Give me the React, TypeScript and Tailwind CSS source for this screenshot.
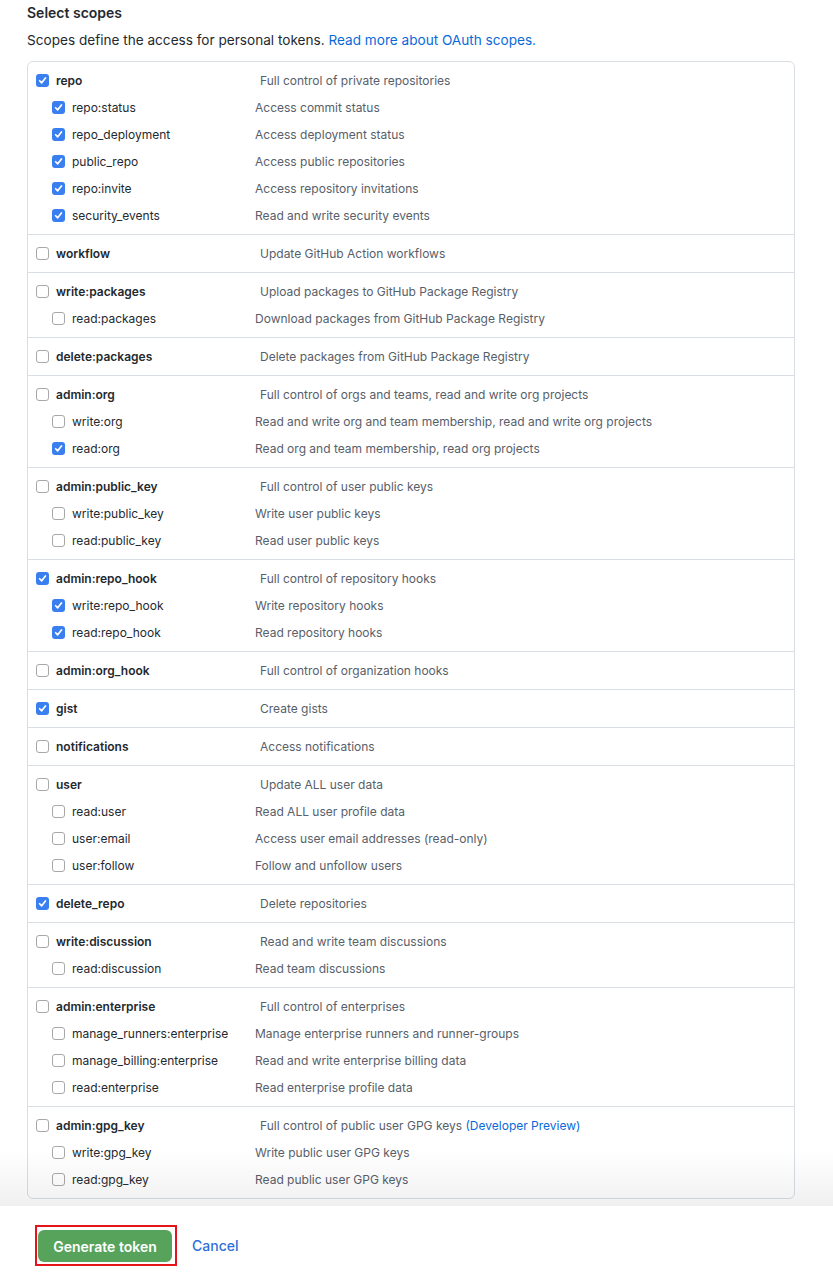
import React from "react";

type Item = { name: string; desc: string; checked: boolean; extra?: string };
type Group = { parent: Item; children: Item[] };

const groups: Group[] = [
  {
    parent: { name: "repo", desc: "Full control of private repositories", checked: true },
    children: [
      { name: "repo:status", desc: "Access commit status", checked: true },
      { name: "repo_deployment", desc: "Access deployment status", checked: true },
      { name: "public_repo", desc: "Access public repositories", checked: true },
      { name: "repo:invite", desc: "Access repository invitations", checked: true },
      { name: "security_events", desc: "Read and write security events", checked: true },
    ],
  },
  { parent: { name: "workflow", desc: "Update GitHub Action workflows", checked: false }, children: [] },
  {
    parent: { name: "write:packages", desc: "Upload packages to GitHub Package Registry", checked: false },
    children: [{ name: "read:packages", desc: "Download packages from GitHub Package Registry", checked: false }],
  },
  { parent: { name: "delete:packages", desc: "Delete packages from GitHub Package Registry", checked: false }, children: [] },
  {
    parent: { name: "admin:org", desc: "Full control of orgs and teams, read and write org projects", checked: false },
    children: [
      { name: "write:org", desc: "Read and write org and team membership, read and write org projects", checked: false },
      { name: "read:org", desc: "Read org and team membership, read org projects", checked: true },
    ],
  },
  {
    parent: { name: "admin:public_key", desc: "Full control of user public keys", checked: false },
    children: [
      { name: "write:public_key", desc: "Write user public keys", checked: false },
      { name: "read:public_key", desc: "Read user public keys", checked: false },
    ],
  },
  {
    parent: { name: "admin:repo_hook", desc: "Full control of repository hooks", checked: true },
    children: [
      { name: "write:repo_hook", desc: "Write repository hooks", checked: true },
      { name: "read:repo_hook", desc: "Read repository hooks", checked: true },
    ],
  },
  { parent: { name: "admin:org_hook", desc: "Full control of organization hooks", checked: false }, children: [] },
  { parent: { name: "gist", desc: "Create gists", checked: true }, children: [] },
  { parent: { name: "notifications", desc: "Access notifications", checked: false }, children: [] },
  {
    parent: { name: "user", desc: "Update ALL user data", checked: false },
    children: [
      { name: "read:user", desc: "Read ALL user profile data", checked: false },
      { name: "user:email", desc: "Access user email addresses (read-only)", checked: false },
      { name: "user:follow", desc: "Follow and unfollow users", checked: false },
    ],
  },
  { parent: { name: "delete_repo", desc: "Delete repositories", checked: true }, children: [] },
  {
    parent: { name: "write:discussion", desc: "Read and write team discussions", checked: false },
    children: [{ name: "read:discussion", desc: "Read team discussions", checked: false }],
  },
  {
    parent: { name: "admin:enterprise", desc: "Full control of enterprises", checked: false },
    children: [
      { name: "manage_runners:enterprise", desc: "Manage enterprise runners and runner-groups", checked: false },
      { name: "manage_billing:enterprise", desc: "Read and write enterprise billing data", checked: false },
      { name: "read:enterprise", desc: "Read enterprise profile data", checked: false },
    ],
  },
  {
    parent: {
      name: "admin:gpg_key",
      desc: "Full control of public user GPG keys",
      checked: false,
      extra: "(Developer Preview)",
    },
    children: [
      { name: "write:gpg_key", desc: "Write public user GPG keys", checked: false },
      { name: "read:gpg_key", desc: "Read public user GPG keys", checked: false },
    ],
  },
];

function Box({ checked }: { checked: boolean }) {
  if (checked) {
    return (
      <span className="flex h-[13px] w-[13px] shrink-0 items-center justify-center rounded-[3px] bg-[#3a7ff0]">
        <svg width="9" height="9" viewBox="0 0 10 10" fill="none">
          <path d="M1.8 5.3 L4.1 7.6 L8.3 2.2" stroke="white" strokeWidth="1.9" strokeLinecap="round" strokeLinejoin="round" />
        </svg>
      </span>
    );
  }
  return <span className="h-[13px] w-[13px] shrink-0 rounded-[3px] border border-[#a8a8a8] bg-white" />;
}

function Row({ item, child }: { item: Item; child: boolean }) {
  return (
    <div className={`flex h-[27px] items-center ${child ? "pl-[24px]" : "pl-[8px]"}`}>
      <Box checked={item.checked} />
      <span
        className={`ml-[7px] shrink-0 text-[12px] text-[#24292f] ${
          child ? "w-[183px]" : "w-[204px] font-semibold"
        }`}
      >
        {item.name}
      </span>
      <span className="text-[12px] text-[#57606a]">
        {item.desc}
        {item.extra ? <span className="text-[#0969da]"> {item.extra}</span> : null}
      </span>
    </div>
  );
}

export default function App() {
  return (
    <div className="relative min-h-[1276px] w-[833px] bg-white font-['Inter','Liberation_Sans',sans-serif] text-[#24292f] antialiased">
      <div className="px-[27px] pt-[3px]">
        <h3 className="text-[14px] font-semibold leading-[20px]">Select scopes</h3>
        <p className="mt-[7px] text-[13.6px] leading-[20px] text-[#24292f]">
          Scopes define the access for personal tokens.{" "}
          <span className="text-[#0969da]">Read more about OAuth scopes.</span>
        </p>
        <div className="mt-[11px] w-[768px] rounded-[6px] border border-[#d8dee4]">
          {groups.map((g, i) => (
            <div key={g.parent.name} className={`py-[5px] ${i > 0 ? "border-t border-[#d8dee4]" : ""}`}>
              <Row item={g.parent} child={false} />
              {g.children.map((c) => (
                <Row key={c.name} item={c} child={true} />
              ))}
            </div>
          ))}
        </div>
        <div className="ml-[8px] mt-[26px] flex items-center">
          <div className="border-2 border-[#e5141b] pb-[2px] pl-[1px] pr-[3px] pt-[3px]">
            <div className="flex h-[32px] w-[134px] items-center justify-center rounded-[6px] bg-[#58a35b] text-[14px] font-semibold text-white">
              Generate token
            </div>
          </div>
          <span className="ml-[15px] text-[14px] font-medium text-[#2e6fd9]">Cancel</span>
        </div>
      </div>
      <div className="pointer-events-none absolute left-0 right-0 top-[1150px] h-[56px] bg-linear-to-b from-transparent to-[rgba(0,0,0,0.06)]" />
    </div>
  );
}
